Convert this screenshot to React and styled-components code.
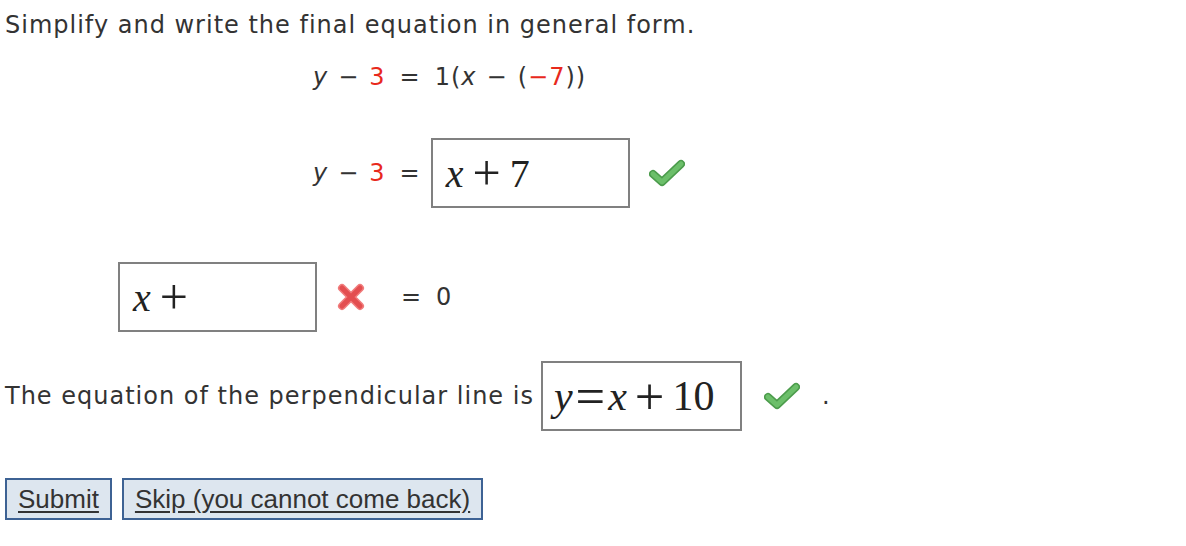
import React from 'react'
import styled, { createGlobalStyle } from 'styled-components'

const Global = createGlobalStyle`
  body {
    margin: 0;
    background: #fff;
    color: #333;
    font-family: "DejaVu Sans", Verdana, sans-serif;
  }
`

const Page = styled.div`
  padding: 10px 0 0 5px;
  font-size: 24px;
  letter-spacing: 1px;
`

const Prompt = styled.div`
  line-height: 30px;
  height: 30px;
`

const Row = styled.div`
  display: flex;
  align-items: center;
  margin-left: ${({ indent = 0 }) => indent}px;
  margin-top: ${({ gap = 0 }) => gap}px;
  height: ${({ h = 70 }) => h}px;
  white-space: pre;
`

const V = styled.span`
  font-style: italic;
`

const Red = styled.span`
  color: #e8291c;
`

const Op = styled.span`
  margin: 0 ${({ r = 10 }) => r}px 0 ${({ l = 10 }) => l}px;
`

const AnswerBox = styled.div`
  box-sizing: border-box;
  flex: none;
  width: ${({ w = 198 }) => w}px;
  height: 70px;
  border: 2px solid #808080;
  display: flex;
  align-items: center;
  padding-left: ${({ pad = 13 }) => pad}px;
  font-family: "Liberation Serif", "Times New Roman", serif;
  font-size: ${({ fs = 40 }) => fs}px;
  letter-spacing: 0;
  color: #222;
  margin-left: ${({ ml = 0 }) => ml}px;
`

const MI = styled.span`
  font-style: italic;
`

const MO = styled.span`
  font-size: ${({ big }) => (big ? 1.25 : 1)}em;
  line-height: 1;
  margin: 0 ${({ sp = 8 }) => sp}px;
`

const Mark = styled.span`
  display: inline-flex;
  margin-left: ${({ ml = 0 }) => ml}px;
`

const Buttons = styled.div`
  display: flex;
  gap: 10px;
  margin-top: 47px;
`

const Button = styled.button`
  box-sizing: border-box;
  height: 42px;
  padding: 0 11px;
  background: #dde6ef;
  border: 2px solid #3d6294;
  font-family: "Liberation Sans", Arial, sans-serif;
  font-size: 26px;
  letter-spacing: 0;
  color: #333;
  text-decoration: underline;
  text-underline-offset: 3px;
  cursor: pointer;
`

const Check = () => (
  <svg width="36" height="28" viewBox="0 0 36 28">
    <path
      d="M4 15 L13 23 L32 5"
      fill="none"
      stroke="#4c9c4c"
      strokeWidth="8"
      strokeLinecap="round"
      strokeLinejoin="round"
    />
    <path
      d="M4 15 L13 23 L32 5"
      fill="none"
      stroke="#6cbf6a"
      strokeWidth="5"
      strokeLinecap="round"
      strokeLinejoin="round"
    />
  </svg>
)

const Cross = () => (
  <svg width="28" height="28" viewBox="0 0 28 28">
    <path d="M5 5 L23 23 M23 5 L5 23" stroke="#f07c7c" strokeWidth="8" strokeLinecap="round" />
    <path d="M5 5 L23 23 M23 5 L5 23" stroke="#e34e50" strokeWidth="5" strokeLinecap="round" />
  </svg>
)

const App = () => (
  <>
    <Global />
    <Page>
      <Prompt>Simplify and write the final equation in general form.</Prompt>
      <Row indent={308} gap={15} h={44}>
        <V>y</V>
        <Op>−</Op>
        <Red>3</Red>
        <Op l={14} r={14}>=</Op>
        1(<V>x</V>
        <Op>−</Op>(<Red>−7</Red>))
      </Row>
      <Row indent={308} gap={39}>
        <V>y</V>
        <Op>−</Op>
        <Red>3</Red>
        <Op l={14} r={10}>=</Op>
        <AnswerBox w={199}>
          <MI>x</MI>
          <MO big sp={9}>+</MO>7
        </AnswerBox>
        <Mark ml={19}>
          <Check />
        </Mark>
      </Row>
      <Row indent={113} gap={54}>
        <AnswerBox w={199}>
          <MI>x</MI>
          <MO big sp={9}>+</MO>
        </AnswerBox>
        <Mark ml={20}>
          <Cross />
        </Mark>
        <Op l={36} r={14}>=</Op>0
      </Row>
      <Row gap={29}>
        The equation of the perpendicular line is
        <AnswerBox w={201} ml={7} pad={11} fs={42}>
          <MI>y</MI>
          <MO big sp={3}>=</MO>
          <MI>x</MI>
          <MO big sp={8}>+</MO>10
        </AnswerBox>
        <Mark ml={22}>
          <Check />
        </Mark>
        <span style={{ marginLeft: 22 }}>.</span>
      </Row>
      <Buttons>
        <Button>Submit</Button>
        <Button>Skip (you cannot come back)</Button>
      </Buttons>
    </Page>
  </>
)

export default App
